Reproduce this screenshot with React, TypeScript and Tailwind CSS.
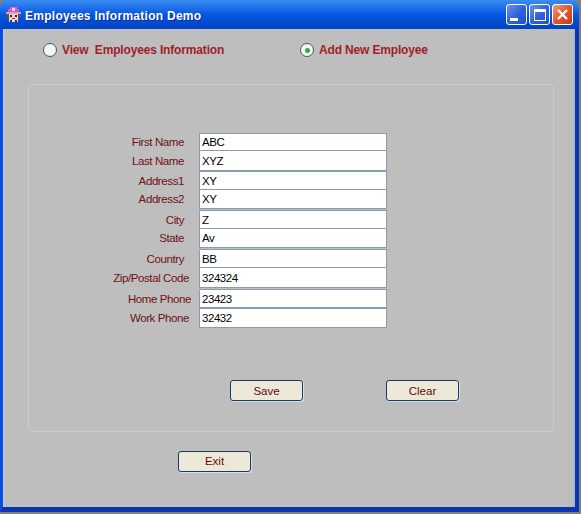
import React from "react";

const rows = [
  { label: "First Name", value: "ABC", row: "mt-0 h-[18px]", pad: "pr-[15px]" },
  { label: "Last Name", value: "XYZ", row: "-mt-px h-[21px]", pad: "pr-[15px]" },
  { label: "Address1", value: "XY", row: "mt-0 h-[19px]", pad: "pr-[15px]" },
  { label: "Address2", value: "XY", row: "-mt-px h-[20px]", pad: "pr-[15px]" },
  { label: "City", value: "Z", row: "mt-[1px] h-[19px]", pad: "pr-[15px]" },
  { label: "State", value: "Av", row: "-mt-px h-[20px]", pad: "pr-[15px]" },
  { label: "Country", value: "BB", row: "mt-[1px] h-[19px]", pad: "pr-[15px]" },
  { label: "Zip/Postal Code", value: "324324", row: "-mt-px h-[21px]", pad: "pr-[10px]" },
  { label: "Home Phone", value: "23423", row: "mt-[1px] h-[19px]", pad: "pr-[8px]" },
  { label: "Work Phone", value: "32432", row: "mt-0 h-[20px]", pad: "pr-[10px]" },
];

function Radio({ checked, label }: { checked?: boolean; label: string }) {
  return (
    <div className="flex items-center gap-[5px]">
      <span className="w-[14px] h-[14px] rounded-full border border-[#3f5670] bg-[#f4f6f6] flex items-center justify-center">
        {checked && <span className="w-[5px] h-[5px] rounded-full bg-[#35a83a]" />}
      </span>
      <span className="text-[12px] leading-[14px] font-bold text-[#a21d2a] whitespace-pre tracking-[-0.16px]">{label}</span>
    </div>
  );
}

function Btn({ label }: { label: string }) {
  return (
    <button className="w-[73px] h-[21px] rounded-[3px] border border-[#1c3a5e] bg-[#ece9d8] text-[11.5px] leading-[18px] text-[#650a0a] shadow-[1px_1px_0_#d4e0ea]">
      {label}
    </button>
  );
}

function WinBtn({ close, children }: { close?: boolean; children: React.ReactNode }) {
  return (
    <div
      className={
        close
          ? "w-[21px] h-[21px] rounded-[3px] border border-white bg-gradient-to-br from-[#f09a78] via-[#e0562f] to-[#c93a18] flex items-center justify-center"
          : "w-[21px] h-[21px] rounded-[3px] border border-white bg-gradient-to-br from-[#6f94ee] via-[#2f62de] to-[#2450c8] flex items-center justify-center"
      }
    >
      {children}
    </div>
  );
}

function AppIcon() {
  return (
    <svg width="17" height="17" viewBox="0 0 17 17" shapeRendering="crispEdges">
      <rect x="5" y="1" width="7" height="2" fill="#f060c8" />
      <rect x="3" y="3" width="11" height="3" fill="#e850c0" />
      <rect x="7" y="2" width="3" height="3" fill="#f8d8f0" />
      <rect x="1" y="6" width="15" height="2" fill="#c8a8d0" />
      <rect x="4" y="8" width="9" height="5" fill="#f8d0b8" />
      <rect x="5" y="9" width="2" height="2" fill="#302028" />
      <rect x="10" y="9" width="2" height="2" fill="#302028" />
      <rect x="7" y="12" width="3" height="1" fill="#b02040" />
      <rect x="1" y="8" width="3" height="4" fill="#585060" />
      <rect x="13" y="8" width="3" height="4" fill="#585060" />
      <rect x="4" y="13" width="9" height="3" fill="#e8d8e8" />
      <rect x="5" y="14" width="2" height="2" fill="#403840" />
      <rect x="10" y="14" width="2" height="2" fill="#403840" />
    </svg>
  );
}

export default function App() {
  return (
    <div
      className="w-[581px] h-[514px] bg-[#7f7f7f] overflow-hidden"
      style={{ fontFamily: '"Liberation Sans", Arial, sans-serif' }}
    >
      <div className="w-[579px] h-[512px] flex flex-col rounded-t-[7px] overflow-hidden">
        <div className="h-[29px] shrink-0 flex items-center justify-between pl-[5px] pr-[6px] bg-gradient-to-b from-[#3a8cf2] via-[#0457e0] to-[#0342c4]">
          <div className="flex items-center gap-[3px]">
            <AppIcon />
            <span className="pt-[2px] text-[12px] font-bold text-white tracking-[0.27px] [text-shadow:1px_1px_0_#0a2f9a]">
              Employees Information Demo
            </span>
          </div>
          <div className="flex gap-[2px]">
            <WinBtn>
              <span className="w-[8px] h-[3px] bg-white mt-[10px] mr-[5px]" />
            </WinBtn>
            <WinBtn>
              <span className="w-[12px] h-[12px] border border-white border-t-[3px]" />
            </WinBtn>
            <WinBtn close>
              <svg width="13" height="13" viewBox="0 0 13 13">
                <path d="M2 2 L11 11 M11 2 L2 11" stroke="#fff" strokeWidth="2.4" />
              </svg>
            </WinBtn>
          </div>
        </div>

        <div className="flex-1 flex border-l-[3px] border-r-[4px] border-b-[5px] border-l-[#0a4be2] border-r-[#0a36b4] border-b-[#0a36b4] bg-[#bebebe]">
          <div className="flex-1 flex flex-col pl-[24px] border-l border-r-[2px] border-l-[#c4cbd8] border-r-[#a9b6d0]">
            <div className="flex items-start h-[55px] pt-[14px] pl-[15px]">
              <div className="w-[257px]">
                <Radio label="View  Employees Information" />
              </div>
              <Radio checked label="Add New Employee" />
            </div>

            <div className="w-[526px] h-[348px] rounded-[5px] border border-[#cfcfbf] flex flex-col">
              <div className="flex flex-col mt-[48px]">
                {rows.map((r) => (
                  <div key={r.label} className={"flex items-center " + r.row}>
                    <div className={"w-[170px] text-right text-[11.5px] leading-[14px] text-[#701018] tracking-[-0.4px] " + r.pad}>
                      {r.label}
                    </div>
                    <div className="w-[188px] h-full flex items-center border border-[#8a9cb0] bg-white pl-[2px] text-[11.5px] leading-[14px] tracking-[-0.45px] text-black">
                      {r.value}
                    </div>
                  </div>
                ))}
              </div>
              <div className="flex mt-[52px] pl-[201px] gap-[83px]">
                <Btn label="Save" />
                <Btn label="Clear" />
              </div>
            </div>

            <div className="pl-[150px] pt-[16px]">
              <Btn label="Exit" />
            </div>
          </div>
        </div>
      </div>
    </div>
  );
}
